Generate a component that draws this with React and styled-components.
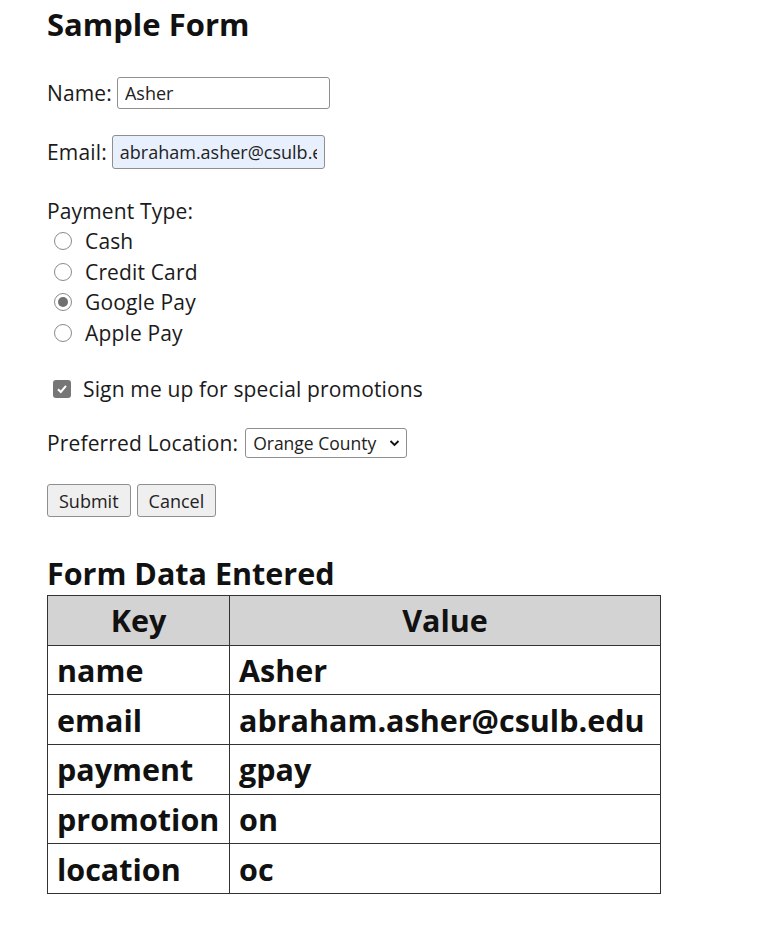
import React from "react";
import styled, { createGlobalStyle } from "styled-components";

const GlobalStyle = createGlobalStyle`
  body {
    margin: 0;
    background: #fff;
    font-family: "Open Sans", "Noto Sans", sans-serif;
    color: #1a1a1a;
  }
`;

const payments = [
  { label: "Cash", value: "cash" },
  { label: "Credit Card", value: "credit" },
  { label: "Google Pay", value: "gpay" },
  { label: "Apple Pay", value: "apay" },
];

const data = [
  ["name", "Asher"],
  ["email", "abraham.asher@csulb.edu"],
  ["payment", "gpay"],
  ["promotion", "on"],
  ["location", "oc"],
];

const App = () => {
  const selected = "gpay";

  return (
    <Page>
      <GlobalStyle />
      <Title>Sample Form</Title>
      <Form>
        <Row $top={29}>
          <Label>Name:</Label>
          <TextBox width={213} height={32} value="Asher" readOnly />
        </Row>
        <Row $top={26}>
          <Label>Email:</Label>
          <TextBox width={213} height={34} value="abraham.asher@csulb.edu" readOnly autofill />
        </Row>
        <Group>
          <Label>Payment Type:</Label>
          {payments.map(p => (
            <RadioRow key={p.value}>
              <Radio checked={p.value === selected} />
              <span>{p.label}</span>
            </RadioRow>
          ))}
        </Group>
        <CheckRow>
          <CheckBox>
            <svg width="12" height="12" viewBox="0 0 12 12">
              <path d="M2 6.2 L4.8 9 L10 2.8" fill="none" stroke="#fff" strokeWidth="2" />
            </svg>
          </CheckBox>
          <span>Sign me up for special promotions</span>
        </CheckRow>
        <Row $top={24} $gap={7}>
          <Label>Preferred Location:</Label>
          <Select>
            Orange County
            <svg width="11" height="8" viewBox="0 0 11 8">
              <path d="M1.5 2 L5.5 6 L9.5 2" fill="none" stroke="#111" strokeWidth="1.8" />
            </svg>
          </Select>
        </Row>
        <Buttons>
          <Button>Submit</Button>
          <Button>Cancel</Button>
        </Buttons>
      </Form>
      <SubTitle>Form Data Entered</SubTitle>
      <Table>
        <colgroup>
          <col style={{ width: 182 }} />
          <col />
        </colgroup>
        <thead>
          <tr>
            <Th>Key</Th>
            <Th>Value</Th>
          </tr>
        </thead>
        <tbody>
          {data.map(([k, v]) => (
            <tr key={k}>
              <Td>{k}</Td>
              <Td>{v}</Td>
            </tr>
          ))}
        </tbody>
      </Table>
    </Page>
  );
};

const Page = styled.div`
  padding: 0 0 40px 47px;
`;

const Title = styled.h1`
  margin: 0;
  font-size: 31px;
  font-weight: 700;
  line-height: 48px;
  color: #111;
`;

const Form = styled.div`
  display: flex;
  flex-direction: column;
  font-size: 21px;
  letter-spacing: 0.15px;
`;

const Row = styled.div`
  display: flex;
  align-items: center;
  gap: ${({ $gap }) => $gap || 5}px;
  margin-top: ${({ $top }) => $top}px;
`;

const Label = styled.span`
  line-height: 30px;
`;

const TextBox = styled.input.withConfig({ shouldForwardProp: p => !["autofill"].includes(p) })`
  box-sizing: border-box;
  width: ${({ width }) => width}px;
  height: ${({ height }) => height}px;
  border: 1px solid #8f8f8f;
  border-radius: 3px;
  padding: 0 7px;
  font-family: inherit;
  font-size: 18px;
  color: #222;
  background: ${({ autofill }) => (autofill ? "#e8f0fe" : "#fff")};
  outline: none;
`;

const Group = styled.div`
  display: flex;
  flex-direction: column;
  margin-top: 27px;
`;

const RadioRow = styled.label`
  display: flex;
  align-items: center;
  gap: 13px;
  height: 30.5px;
  padding-left: 7px;
`;

const Radio = styled.span`
  box-sizing: border-box;
  width: 18px;
  height: 18px;
  border-radius: 50%;
  border: 1px solid #8a8a8a;
  background: #fff;
  display: flex;
  align-items: center;
  justify-content: center;

  &::after {
    content: "";
    width: 10px;
    height: 10px;
    border-radius: 50%;
    background: ${({ checked }) => (checked ? "#707070" : "transparent")};
  }
`;

const CheckRow = styled.div`
  display: flex;
  align-items: center;
  gap: 12px;
  height: 30px;
  margin-top: 26px;
  padding-left: 6px;
`;

const CheckBox = styled.span`
  width: 18px;
  height: 18px;
  border-radius: 3px;
  background: #767676;
  display: flex;
  align-items: center;
  justify-content: center;
`;

const Select = styled.div`
  box-sizing: border-box;
  display: flex;
  align-items: center;
  justify-content: space-between;
  width: 162px;
  height: 30px;
  padding: 0 6px 0 7px;
  border: 1px solid #8f8f8f;
  border-radius: 3px;
  font-size: 17.5px;
  letter-spacing: 0;
  color: #222;
`;

const Buttons = styled.div`
  display: flex;
  gap: 6px;
  margin-top: 26px;
`;

const Button = styled.button`
  box-sizing: border-box;
  height: 33px;
  padding: 0 11px;
  background: #efefef;
  border: 1px solid #8f8f8f;
  border-radius: 3px;
  font-family: inherit;
  font-size: 18px;
  color: #222;
`;

const SubTitle = styled.h2`
  margin: 36px 0 2px;
  font-size: 30.5px;
  font-weight: 700;
  line-height: 40px;
  color: #111;
`;

const Table = styled.table`
  border-collapse: collapse;
  table-layout: fixed;
  width: 614px;
  font-size: 30.5px;
  font-weight: 700;
  color: #111;
`;

const Th = styled.th`
  height: 48.7px;
  padding: 0;
  background: #d3d3d3;
  border: 1px solid #333;
  text-align: center;
`;

const Td = styled.td`
  height: 48.7px;
  padding: 0 0 0 9px;
  border: 1px solid #333;
  white-space: nowrap;
  overflow: hidden;
`;

export default App;
